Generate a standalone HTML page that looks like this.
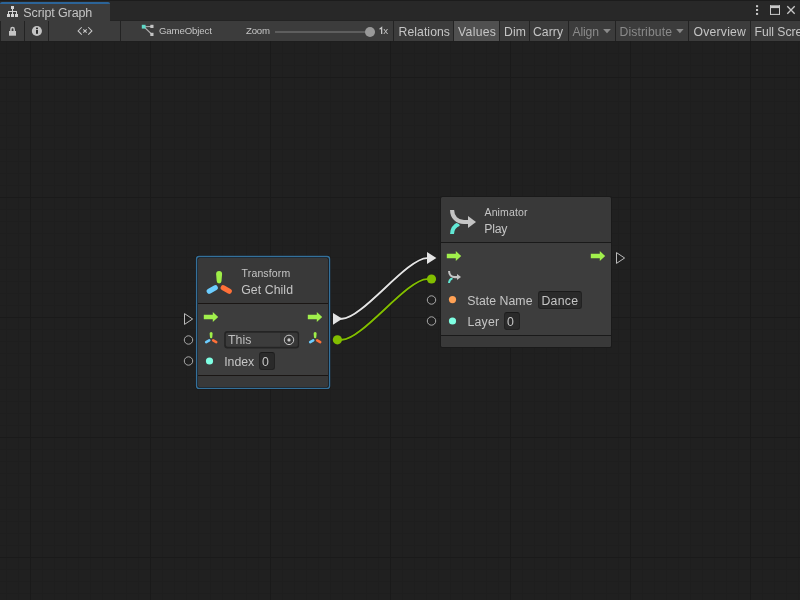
<!DOCTYPE html>
<html>
<head>
<meta charset="utf-8">
<title>Script Graph</title>
<style>
*{box-sizing:border-box;margin:0;padding:0}
html,body{width:800px;height:600px;overflow:hidden;background:#202020;font-family:"Liberation Sans",sans-serif;color:#d2d2d2}
#root{position:relative;width:800px;height:600px;overflow:hidden;background:#202020;will-change:transform}
.abs,.r{position:absolute}
#canvas{position:absolute;left:0;top:41px;width:800px;height:559px;background-color:#202020;
 background-image:
  linear-gradient(to right,#1a1a1a 1px,transparent 1px),
  linear-gradient(to bottom,#1a1a1a 1px,transparent 1px),
  linear-gradient(to right,#1e1e1e 1px,transparent 1px),
  linear-gradient(to bottom,#1e1e1e 1px,transparent 1px);
 background-size:120px 120px,120px 120px,12px 12px,12px 12px;
 background-position:30px 0,0 36px,6px 0,0 0;
}
.t{position:absolute;white-space:nowrap;line-height:1;color:#d2d2d2}
.btn{position:absolute;top:21px;height:20px;background:#3c3c3c}
.fld{position:absolute;background:#2a2a2a;border:1px solid #222;border-top-color:#1b1b1b;border-radius:3px}
</style>
</head>
<body>
<div id="root">
<div id="canvas"></div>

<!-- top bar -->
<div class="r" style="left:0;top:0;width:800px;height:21px;background:#282828"></div>
<div class="r" style="left:0;top:0;width:800px;height:1px;background:#1c1c1c"></div>
<div class="r" style="left:0;top:20px;width:800px;height:21px;background:#232323"></div>
<div class="r" style="left:0;top:2px;width:110px;height:19px;background:#3c3c3c;border-top:2px solid #2c6498;border-radius:2px 2px 0 0"></div>
<!-- toolbar buttons -->
<div class="btn" style="left:1px;width:23px"></div>
<div class="btn" style="left:25px;width:23px"></div>
<div class="btn" style="left:49px;width:71px"></div>
<div class="btn" style="left:121px;width:272px"></div>
<div class="btn" style="left:394px;width:59px"></div>
<div class="btn" style="left:454px;width:45px;background:#505050"></div>
<div class="btn" style="left:500px;width:29px"></div>
<div class="btn" style="left:530px;width:38px"></div>
<div class="btn" style="left:569px;width:46px"></div>
<div class="btn" style="left:616px;width:72px"></div>
<div class="btn" style="left:689px;width:61px"></div>
<div class="btn" style="left:751px;width:49px"></div>
<!-- slider -->
<div class="r" style="left:275px;top:31px;width:100px;height:2px;background:#5e5e5e"></div>
<div class="r" style="left:365px;top:27px;width:10px;height:10px;border-radius:5px;background:#999"></div>

<!-- NODE 1 -->
<div class="r" style="left:197px;top:257px;width:132px;height:131px;background:#1a1614;border-radius:2px"></div>
<div class="r" style="left:198px;top:258px;width:130px;height:45px;background:#393939;border-radius:1.5px 1.5px 0 0"></div>
<div class="r" style="left:198px;top:304px;width:130px;height:71px;background:#3d3d3d"></div>
<div class="r" style="left:198px;top:376px;width:130px;height:11px;background:#393939;border-radius:0 0 1.5px 1.5px"></div>
<div class="fld" style="left:259px;top:352px;width:16px;height:18px"></div>

<!-- NODE 2 -->
<div class="r" style="left:440px;top:196px;width:172px;height:152px;background:#1a1a1a;border-radius:2px"></div>
<div class="r" style="left:441px;top:197px;width:170px;height:45px;background:#393939;border-radius:1.5px 1.5px 0 0"></div>
<div class="r" style="left:441px;top:243px;width:170px;height:92px;background:#3d3d3d"></div>
<div class="r" style="left:441px;top:336px;width:170px;height:11px;background:#393939;border-radius:0 0 1.5px 1.5px"></div>
<div class="fld" style="left:538px;top:291px;width:44px;height:18px"></div>
<div class="fld" style="left:504px;top:312px;width:16px;height:18px"></div>

<!-- vector overlay -->
<svg class="abs" style="left:0;top:0" width="800" height="600" viewBox="0 0 800 600">
<defs>
  <g id="xf">
    <path d="M216.1 274 A3 3 0 0 1 222.1 274 L221.5 281 A2.4 2.4 0 0 1 216.7 281 Z" fill="#9fee48"/>
    <line x1="215.3" y1="287.7" x2="209.2" y2="291.3" stroke="#6ccdff" stroke-width="5.1" stroke-linecap="round"/>
    <line x1="223.2" y1="287.7" x2="229.3" y2="291.3" stroke="#ff7038" stroke-width="5.1" stroke-linecap="round"/>
  </g>
  <g id="an">
    <path d="M452.05 234 C452.05 229.2 454.6 225.8 459 223.9" stroke="#62e8d5" stroke-width="3.9" fill="none"/>
    <path d="M452.1 211 C452.1 217 457 222 464 222 L468.5 222" stroke="#3a3a3a" stroke-width="5.6" fill="none"/>
    <path d="M452.1 210 C452.1 217 457 222 464 222 L468.5 222" stroke="#c4c4c4" stroke-width="4.1" fill="none"/>
    <path d="M468 216 L476 222 L468 228 Z" fill="#c4c4c4"/>
  </g>
  <g id="ans">
    <path d="M452.2 210 C452.2 217 457 222 464 222 L468.5 222" stroke="#c4c4c4" stroke-width="3.3" fill="none"/>
    <path d="M468 216 L475.7 222 L468 228 Z" fill="#c4c4c4"/>
    <path d="M452.2 234 C452.2 229.8 454.3 226.8 457.7 225" stroke="#62e8d5" stroke-width="3.3" fill="none"/>
  </g>
  <path id="arrow" d="M0 -2.2 H9 V-5 L14.4 0.1 L9 5.1 V2.3 H0 Z" fill="#a1f04c"/>
</defs>
<!-- object field -->
<rect x="224.2" y="331.1" width="74.9" height="17.3" rx="3.2" ry="3.2" fill="#242424"/>
<path d="M227.4 332.8 H280 V346.7 H227.4 A1.6 1.6 0 0 1 225.8 345.1 V334.4 A1.6 1.6 0 0 1 227.4 332.8 Z" fill="#3c3c3c"/>
<path d="M280 332.8 H296.2 A1.6 1.6 0 0 1 297.8 334.4 V345.1 A1.6 1.6 0 0 1 296.2 346.7 H280 Z" fill="#373737"/>

<!-- tab icon -->
<g fill="#d2d2d2">
  <rect x="11" y="6" width="3" height="3"/><rect x="7" y="14" width="3" height="3"/><rect x="11" y="14" width="3" height="3"/><rect x="15" y="14" width="3" height="3"/>
  <rect x="12" y="9" width="1" height="5"/><rect x="8" y="11" width="9" height="1"/><rect x="8" y="11" width="1" height="3"/><rect x="16" y="11" width="1" height="3"/>
</g>
<!-- window icons -->
<g fill="#c8c8c8">
  <rect x="756" y="5.2" width="2.1" height="2"/><rect x="756" y="9" width="2.1" height="2"/><rect x="756" y="12.9" width="2.1" height="2"/>
  <rect x="770" y="5.3" width="10" height="2.8"/><rect x="770" y="5.3" width="1" height="9.6"/><rect x="779" y="5.3" width="1" height="9.6"/><rect x="770" y="13.9" width="10" height="1"/>
</g>
<path d="M787.3 6.3 L794.7 13.7 M794.7 6.3 L787.3 13.7" stroke="#c8c8c8" stroke-width="1.3" fill="none"/>

<!-- toolbar icons -->
<rect x="9" y="31" width="7" height="4.7" fill="#c4c4c4"/>
<path d="M10.9 31.2 V29.2 A1.65 1.65 0 0 1 14.2 29.2 V31.2" stroke="#c4c4c4" stroke-width="1.5" fill="none"/>
<circle cx="36.9" cy="31" r="5.05" fill="#c4c4c4"/>
<rect x="36" y="30" width="2" height="3.8" fill="#303030"/><rect x="36" y="27.6" width="2" height="1.6" fill="#303030"/>
<path d="M81.75 27.25 L78.1 30.95 L81.75 34.65 M88.25 27.25 L91.9 30.95 L88.25 34.65 M83.3 29.3 L86.7 32.7 M86.7 29.3 L83.3 32.7" stroke="#c8c8c8" stroke-width="1.05" fill="none"/>
<path d="M144 26.8 L151.8 26.5 M144 26.8 L152 34.5" stroke="#b0b0b0" stroke-width="1.1" fill="none"/>
<rect x="141.8" y="24.8" width="3.8" height="3.8" fill="#5fd9c8"/><rect x="150.3" y="24.8" width="3.2" height="3.2" fill="#c4c4c4"/><rect x="150.3" y="32.8" width="3.2" height="3.2" fill="#c4c4c4"/>
<path d="M379.6 29.2 L381.65 27.5 V33.9" stroke="#c9c9c9" stroke-width="1.25" fill="none" stroke-linejoin="miter"/>
<path d="M603.1 29.1 H610.9 L607 33.2 Z" fill="#8a8a8a"/>
<path d="M676.2 29.1 H683.6 L679.9 33.3 Z" fill="#8a8a8a"/>

<!-- wires -->
<path d="M339 318.8 H342 C362 318.8 407 258.1 427 258.1 H430" stroke="#171717" stroke-width="3.2" fill="none"/>
<path d="M339 339.8 H342 C362 339.8 407 279.1 427 279.1 H430" stroke="#171717" stroke-width="3.2" fill="none"/>
<path d="M339 318.8 H342 C362 318.8 407 258.1 427 258.1 H430" stroke="#e4e4e4" stroke-width="1.9" fill="none"/>
<path d="M339 339.8 H342 C362 339.8 407 279.1 427 279.1 H430" stroke="#82be00" stroke-width="1.9" fill="none"/>

<!-- node1 selection border -->
<rect x="196.6" y="256.5" width="132.95" height="131.85" rx="2.4" ry="2.4" fill="none" stroke="#1a1614" stroke-width="2.5"/>
<rect x="196.6" y="256.5" width="132.95" height="131.85" rx="2.4" ry="2.4" fill="none" stroke="#34719b" stroke-width="1.4"/>

<!-- node1 ports -->
<path d="M184.5 313.6 V324.4 L192.6 319 Z" fill="none" stroke="#c4c4c4" stroke-width="0.95"/>
<circle cx="188.5" cy="340" r="4.2" fill="none" stroke="#bebebe" stroke-width="0.85"/>
<circle cx="188.5" cy="361" r="4.2" fill="none" stroke="#bebebe" stroke-width="0.85"/>
<path d="M333 312.9 V324.8 L342.3 318.8 Z" fill="#e4e4e4"/>
<circle cx="337.4" cy="339.8" r="4.6" fill="#82be00"/>
<!-- node1 icons -->
<use href="#xf"/>
<use href="#xf" transform="translate(211.2 332) scale(0.5) translate(-219.25 -271)"/>
<use href="#xf" transform="translate(315.2 332) scale(0.5) translate(-219.25 -271)"/>
<use href="#arrow" x="203.8" y="317"/>
<use href="#arrow" x="307.8" y="317"/>
<circle cx="209.5" cy="361" r="3.6" fill="#7fffe3"/>
<circle cx="289" cy="339.9" r="4.7" fill="none" stroke="#c8c8c8" stroke-width="1"/>
<circle cx="289" cy="339.9" r="1.6" fill="#c8c8c8"/>

<!-- node2 ports -->
<path d="M427 252 V264 L436.4 258 Z" fill="#e4e4e4"/>
<circle cx="431.5" cy="279" r="4.6" fill="#82be00"/>
<circle cx="431.5" cy="300" r="4.2" fill="none" stroke="#bebebe" stroke-width="0.85"/>
<circle cx="431.5" cy="321" r="4.2" fill="none" stroke="#bebebe" stroke-width="0.85"/>
<path d="M616.5 252.6 V263.4 L624.6 258 Z" fill="none" stroke="#c4c4c4" stroke-width="0.95"/>
<!-- node2 icons -->
<use href="#an"/>
<use href="#an" transform="translate(448 271.1) scale(0.5) translate(-450 -210)"/>
<use href="#arrow" x="446.8" y="256"/>
<use href="#arrow" x="590.8" y="256"/>
<circle cx="452.5" cy="299.6" r="3.6" fill="#ffa155"/>
<circle cx="452.5" cy="321" r="3.6" fill="#7fffe3"/>
</svg>

<div class="t" style="left:23.30px;top:6.75px;font-size:12.5px;letter-spacing:-0.106px;color:#c5c5c5">Script Graph</div>
<div class="t" style="left:159.00px;top:25.70px;font-size:9.6px;letter-spacing:-0.098px;color:#c5c5c5">GameObject</div>
<div class="t" style="left:246.00px;top:25.70px;font-size:9.6px;letter-spacing:-0.179px;color:#c5c5c5">Zoom</div>
<div class="t" style="left:383.20px;top:25.60px;font-size:9.8px;letter-spacing:0.000px;color:#c5c5c5">x</div>
<div class="t" style="left:398.50px;top:25.90px;font-size:12.2px;letter-spacing:0.080px;color:#c5c5c5">Relations</div>
<div class="t" style="left:458.00px;top:25.90px;font-size:12.2px;letter-spacing:0.321px;color:#c5c5c5">Values</div>
<div class="t" style="left:504.00px;top:25.90px;font-size:12.2px;letter-spacing:0.160px;color:#c5c5c5">Dim</div>
<div class="t" style="left:533.00px;top:25.90px;font-size:12.2px;letter-spacing:0.046px;color:#c5c5c5">Carry</div>
<div class="t" style="left:572.50px;top:25.90px;font-size:12.2px;letter-spacing:-0.158px;color:#8a8a8a">Align</div>
<div class="t" style="left:619.50px;top:25.90px;font-size:12.2px;letter-spacing:0.107px;color:#8a8a8a">Distribute</div>
<div class="t" style="left:693.50px;top:25.90px;font-size:12.2px;letter-spacing:0.232px;color:#c5c5c5">Overview</div>
<div class="t" style="left:754.50px;top:25.90px;font-size:12.2px;letter-spacing:-0.041px;color:#c5c5c5">Full Screen</div>
<div class="t" style="left:241.60px;top:267.75px;font-size:10.5px;letter-spacing:0.144px;color:#c5c5c5">Transform</div>
<div class="t" style="left:241.20px;top:283.85px;font-size:12.3px;letter-spacing:0.067px;color:#c5c5c5">Get Child</div>
<div class="t" style="left:228.00px;top:333.85px;font-size:12.3px;letter-spacing:0.022px;color:#bebebe">This</div>
<div class="t" style="left:224.20px;top:355.85px;font-size:12.3px;letter-spacing:-0.021px;color:#c5c5c5">Index</div>
<div class="t" style="left:262.00px;top:355.85px;font-size:12.3px;letter-spacing:0.000px;color:#c5c5c5">0</div>
<div class="t" style="left:484.50px;top:206.75px;font-size:10.5px;letter-spacing:0.140px;color:#c5c5c5">Animator</div>
<div class="t" style="left:484.30px;top:222.85px;font-size:12.3px;letter-spacing:-0.241px;color:#c5c5c5">Play</div>
<div class="t" style="left:467.20px;top:294.85px;font-size:12.3px;letter-spacing:0.040px;color:#c5c5c5">State Name</div>
<div class="t" style="left:541.50px;top:294.85px;font-size:12.3px;letter-spacing:0.235px;color:#c5c5c5">Dance</div>
<div class="t" style="left:467.50px;top:315.85px;font-size:12.3px;letter-spacing:0.184px;color:#c5c5c5">Layer</div>
<div class="t" style="left:507.00px;top:315.85px;font-size:12.3px;letter-spacing:0.000px;color:#c5c5c5">0</div>
</div>
</body>
</html>
